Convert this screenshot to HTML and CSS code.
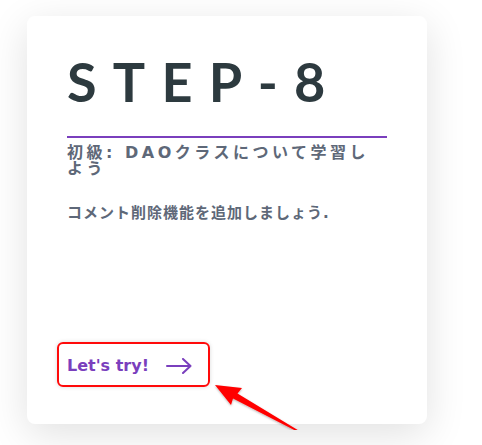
FILE: index.html
```html
<!DOCTYPE html>
<html lang="ja">
<head>
<meta charset="utf-8">
<link rel="stylesheet" href="styles.css">
</head>
<body>
<div class="page">
  <div class="card">
    <h1 class="step">STEP-8</h1>
    <div class="rule"></div>
    <h2 class="subtitle">初級: DAOクラスについて学習しよう</h2>
    <p class="desc">コメント削除機能を追加しましょう.</p>
    <a class="try" href="#">
      <span>Let's try!</span>
      <svg class="arrow-icon" width="26" height="16" viewBox="0 0 26 16"><path d="M1 8H24.5M17 1L24.5 8L17 15" fill="none" stroke="#7a3fbd" stroke-width="2" stroke-linecap="round" stroke-linejoin="round"/></svg>
    </a>
  </div>
  <svg class="pointer" width="100" height="60" viewBox="0 0 100 60">
    <defs>
      <filter id="sh" x="-20%" y="-20%" width="140%" height="140%">
        <feDropShadow dx="0" dy="1" stdDeviation="1.2" flood-color="#000" flood-opacity="0.3"/>
      </filter>
    </defs>
    <path d="M15 15 L42 18 L37.5 23.5 L101 62 L100 63 L33 28.5 L31 35 Z" fill="#ff0000" filter="url(#sh)"/>
  </svg>
</div>
</body>
</html>
```
FILE: styles.css
```css
html, body {
  margin: 0;
  padding: 0;
  background: #ffffff;
}
.page {
  position: relative;
  width: 482px;
  height: 445px;
  overflow: hidden;
  padding: 16px 0 0 27px;
  box-sizing: border-box;
}
.card {
  width: 400px;
  height: 408px;
  box-sizing: border-box;
  background: #fff;
  border-radius: 8px;
  box-shadow: 0 10px 40px rgba(0, 0, 0, 0.12);
  padding: 0 40px;
  display: flex;
  flex-direction: column;
}
.step {
  margin: 36px 0 0 0;
  font-family: Lato, "Open Sans", sans-serif;
  font-weight: 700;
  font-size: 54px;
  line-height: 60px;
  letter-spacing: 0.3em;
  color: #2d3a3f;
}
.rule {
  width: 320px;
  height: 2px;
  background: #7a3fbd;
  margin-top: 24px;
}
.subtitle {
  margin: 7px 0 0 0;
  width: 312px;
  font-family: "DejaVu Sans", "Noto Sans CJK JP", sans-serif;
  font-weight: 700;
  font-size: 16px;
  line-height: 16px;
  letter-spacing: 3.5px;
  color: #5e6878;
}
.desc {
  margin: 27px 0 0 0;
  font-family: "DejaVu Sans", "Noto Sans CJK JP", sans-serif;
  font-weight: 700;
  font-size: 15px;
  line-height: 18px;
  letter-spacing: 1px;
  color: #5e6878;
}
.try {
  margin: auto 0 37px -10px;
  align-self: flex-start;
  display: flex;
  align-items: center;
  gap: 17px;
  height: 45px;
  box-sizing: border-box;
  padding: 2px 16px 0 8px;
  border: 2px solid #ff0a0a;
  border-radius: 6px;
  box-shadow: 0 0 4px rgba(0, 0, 0, 0.15);
  text-decoration: none;
  font-family: "DejaVu Sans", sans-serif;
  font-weight: 700;
  font-size: 16px;
  color: #7a3fbd;
}
.arrow-icon {
  display: block;
}
.pointer {
  position: absolute;
  left: 200px;
  top: 370px;
}
```
